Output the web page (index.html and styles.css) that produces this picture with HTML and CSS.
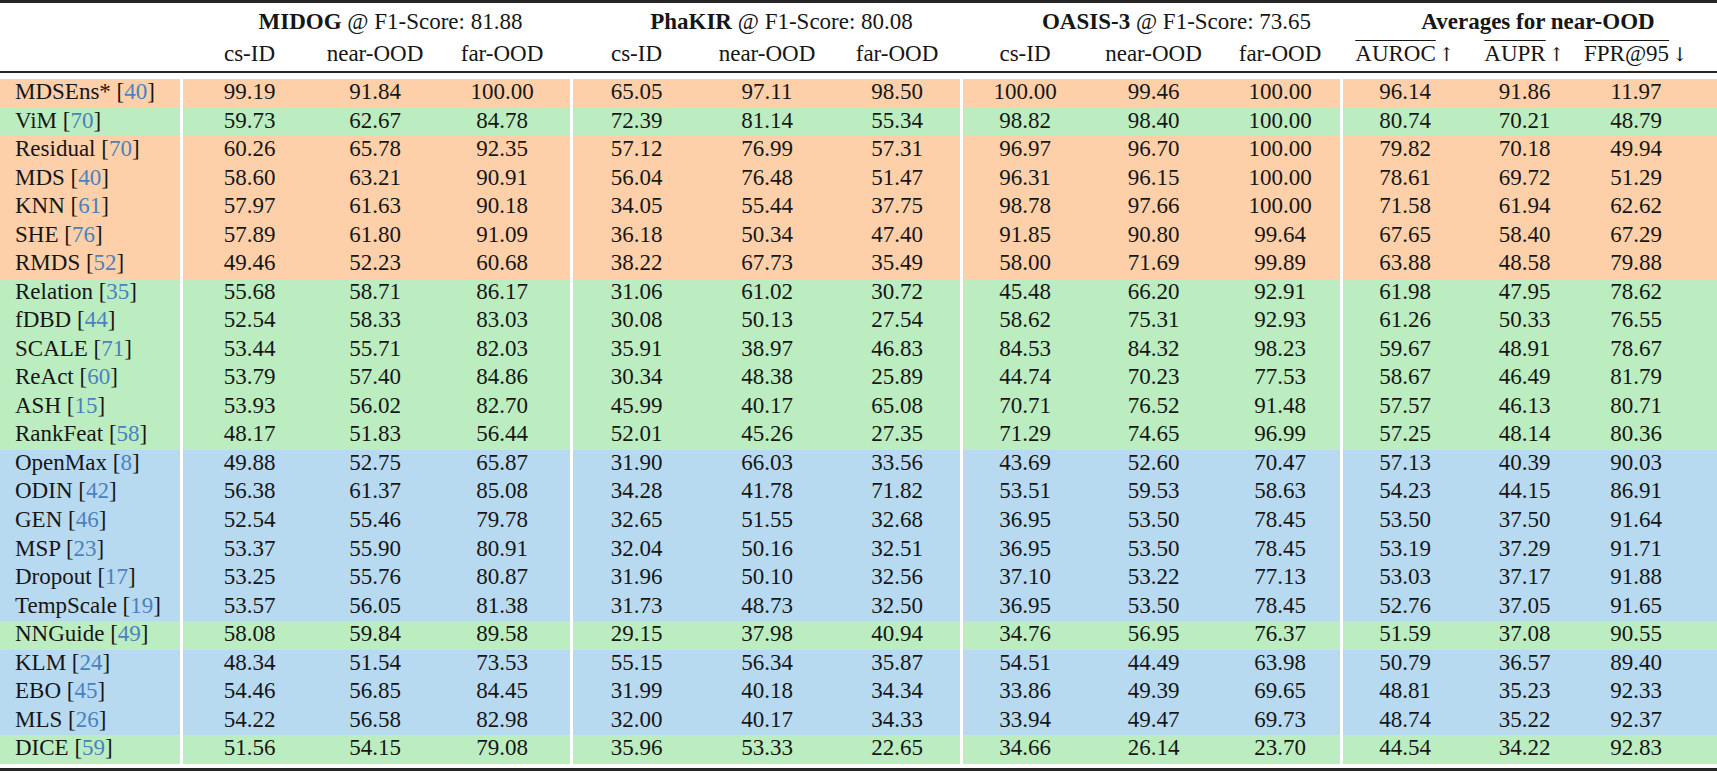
FILE: index.html
```html
<!DOCTYPE html>
<html>
<head>
<meta charset="utf-8">
<link rel="stylesheet" href="styles.css">
</head>
<body>
<div class="table">
  <div class="toprule"></div>
  <div class="row hdr1">
    <div class="m"></div>
    <div class="grp g h-midog"><b>MIDOG</b> @ F1-Score: 81.88</div>
    <div class="grp g h-phakir"><b>PhaKIR</b> @ F1-Score: 80.08</div>
    <div class="grp g h-oasis"><b>OASIS-3</b> @ F1-Score: 73.65</div>
    <div class="grp g h-avg"><b>Averages for near-OOD</b></div>
  </div>
  <div class="row hdr2">
    <div class="m"></div>
    <div class="c g">cs-ID</div><div class="c">near-OOD</div><div class="c">far-OOD</div>
    <div class="c g">cs-ID</div><div class="c">near-OOD</div><div class="c">far-OOD</div>
    <div class="c g">cs-ID</div><div class="c">near-OOD</div><div class="c">far-OOD</div>
    <div class="c g"><span class="ol">AUROC</span><span class="ar">↑</span></div><div class="c"><span class="ol">AUPR</span><span class="ar">↑</span></div><div class="c last"><span class="ol">FPR@95</span><span class="ar">↓</span></div>
  </div>
  <div class="midrule"></div>
  <div class="body">
    <div class="row d o"><div class="m">MDSEns* [<span class="cite">40</span>]</div><div class="c g">99.19</div><div class="c">91.84</div><div class="c">100.00</div><div class="c g">65.05</div><div class="c">97.11</div><div class="c">98.50</div><div class="c g">100.00</div><div class="c">99.46</div><div class="c">100.00</div><div class="c g">96.14</div><div class="c">91.86</div><div class="c last">11.97</div></div>
    <div class="row d gr"><div class="m">ViM [<span class="cite">70</span>]</div><div class="c g">59.73</div><div class="c">62.67</div><div class="c">84.78</div><div class="c g">72.39</div><div class="c">81.14</div><div class="c">55.34</div><div class="c g">98.82</div><div class="c">98.40</div><div class="c">100.00</div><div class="c g">80.74</div><div class="c">70.21</div><div class="c last">48.79</div></div>
    <div class="row d o"><div class="m">Residual [<span class="cite">70</span>]</div><div class="c g">60.26</div><div class="c">65.78</div><div class="c">92.35</div><div class="c g">57.12</div><div class="c">76.99</div><div class="c">57.31</div><div class="c g">96.97</div><div class="c">96.70</div><div class="c">100.00</div><div class="c g">79.82</div><div class="c">70.18</div><div class="c last">49.94</div></div>
    <div class="row d o"><div class="m">MDS [<span class="cite">40</span>]</div><div class="c g">58.60</div><div class="c">63.21</div><div class="c">90.91</div><div class="c g">56.04</div><div class="c">76.48</div><div class="c">51.47</div><div class="c g">96.31</div><div class="c">96.15</div><div class="c">100.00</div><div class="c g">78.61</div><div class="c">69.72</div><div class="c last">51.29</div></div>
    <div class="row d o"><div class="m">KNN [<span class="cite">61</span>]</div><div class="c g">57.97</div><div class="c">61.63</div><div class="c">90.18</div><div class="c g">34.05</div><div class="c">55.44</div><div class="c">37.75</div><div class="c g">98.78</div><div class="c">97.66</div><div class="c">100.00</div><div class="c g">71.58</div><div class="c">61.94</div><div class="c last">62.62</div></div>
    <div class="row d o"><div class="m">SHE [<span class="cite">76</span>]</div><div class="c g">57.89</div><div class="c">61.80</div><div class="c">91.09</div><div class="c g">36.18</div><div class="c">50.34</div><div class="c">47.40</div><div class="c g">91.85</div><div class="c">90.80</div><div class="c">99.64</div><div class="c g">67.65</div><div class="c">58.40</div><div class="c last">67.29</div></div>
    <div class="row d o"><div class="m">RMDS [<span class="cite">52</span>]</div><div class="c g">49.46</div><div class="c">52.23</div><div class="c">60.68</div><div class="c g">38.22</div><div class="c">67.73</div><div class="c">35.49</div><div class="c g">58.00</div><div class="c">71.69</div><div class="c">99.89</div><div class="c g">63.88</div><div class="c">48.58</div><div class="c last">79.88</div></div>
    <div class="row d gr"><div class="m">Relation [<span class="cite">35</span>]</div><div class="c g">55.68</div><div class="c">58.71</div><div class="c">86.17</div><div class="c g">31.06</div><div class="c">61.02</div><div class="c">30.72</div><div class="c g">45.48</div><div class="c">66.20</div><div class="c">92.91</div><div class="c g">61.98</div><div class="c">47.95</div><div class="c last">78.62</div></div>
    <div class="row d gr"><div class="m">fDBD [<span class="cite">44</span>]</div><div class="c g">52.54</div><div class="c">58.33</div><div class="c">83.03</div><div class="c g">30.08</div><div class="c">50.13</div><div class="c">27.54</div><div class="c g">58.62</div><div class="c">75.31</div><div class="c">92.93</div><div class="c g">61.26</div><div class="c">50.33</div><div class="c last">76.55</div></div>
    <div class="row d gr"><div class="m">SCALE [<span class="cite">71</span>]</div><div class="c g">53.44</div><div class="c">55.71</div><div class="c">82.03</div><div class="c g">35.91</div><div class="c">38.97</div><div class="c">46.83</div><div class="c g">84.53</div><div class="c">84.32</div><div class="c">98.23</div><div class="c g">59.67</div><div class="c">48.91</div><div class="c last">78.67</div></div>
    <div class="row d gr"><div class="m">ReAct [<span class="cite">60</span>]</div><div class="c g">53.79</div><div class="c">57.40</div><div class="c">84.86</div><div class="c g">30.34</div><div class="c">48.38</div><div class="c">25.89</div><div class="c g">44.74</div><div class="c">70.23</div><div class="c">77.53</div><div class="c g">58.67</div><div class="c">46.49</div><div class="c last">81.79</div></div>
    <div class="row d gr"><div class="m">ASH [<span class="cite">15</span>]</div><div class="c g">53.93</div><div class="c">56.02</div><div class="c">82.70</div><div class="c g">45.99</div><div class="c">40.17</div><div class="c">65.08</div><div class="c g">70.71</div><div class="c">76.52</div><div class="c">91.48</div><div class="c g">57.57</div><div class="c">46.13</div><div class="c last">80.71</div></div>
    <div class="row d gr"><div class="m">RankFeat [<span class="cite">58</span>]</div><div class="c g">48.17</div><div class="c">51.83</div><div class="c">56.44</div><div class="c g">52.01</div><div class="c">45.26</div><div class="c">27.35</div><div class="c g">71.29</div><div class="c">74.65</div><div class="c">96.99</div><div class="c g">57.25</div><div class="c">48.14</div><div class="c last">80.36</div></div>
    <div class="row d b"><div class="m">OpenMax [<span class="cite">8</span>]</div><div class="c g">49.88</div><div class="c">52.75</div><div class="c">65.87</div><div class="c g">31.90</div><div class="c">66.03</div><div class="c">33.56</div><div class="c g">43.69</div><div class="c">52.60</div><div class="c">70.47</div><div class="c g">57.13</div><div class="c">40.39</div><div class="c last">90.03</div></div>
    <div class="row d b"><div class="m">ODIN [<span class="cite">42</span>]</div><div class="c g">56.38</div><div class="c">61.37</div><div class="c">85.08</div><div class="c g">34.28</div><div class="c">41.78</div><div class="c">71.82</div><div class="c g">53.51</div><div class="c">59.53</div><div class="c">58.63</div><div class="c g">54.23</div><div class="c">44.15</div><div class="c last">86.91</div></div>
    <div class="row d b"><div class="m">GEN [<span class="cite">46</span>]</div><div class="c g">52.54</div><div class="c">55.46</div><div class="c">79.78</div><div class="c g">32.65</div><div class="c">51.55</div><div class="c">32.68</div><div class="c g">36.95</div><div class="c">53.50</div><div class="c">78.45</div><div class="c g">53.50</div><div class="c">37.50</div><div class="c last">91.64</div></div>
    <div class="row d b"><div class="m">MSP [<span class="cite">23</span>]</div><div class="c g">53.37</div><div class="c">55.90</div><div class="c">80.91</div><div class="c g">32.04</div><div class="c">50.16</div><div class="c">32.51</div><div class="c g">36.95</div><div class="c">53.50</div><div class="c">78.45</div><div class="c g">53.19</div><div class="c">37.29</div><div class="c last">91.71</div></div>
    <div class="row d b"><div class="m">Dropout [<span class="cite">17</span>]</div><div class="c g">53.25</div><div class="c">55.76</div><div class="c">80.87</div><div class="c g">31.96</div><div class="c">50.10</div><div class="c">32.56</div><div class="c g">37.10</div><div class="c">53.22</div><div class="c">77.13</div><div class="c g">53.03</div><div class="c">37.17</div><div class="c last">91.88</div></div>
    <div class="row d b"><div class="m">TempScale [<span class="cite">19</span>]</div><div class="c g">53.57</div><div class="c">56.05</div><div class="c">81.38</div><div class="c g">31.73</div><div class="c">48.73</div><div class="c">32.50</div><div class="c g">36.95</div><div class="c">53.50</div><div class="c">78.45</div><div class="c g">52.76</div><div class="c">37.05</div><div class="c last">91.65</div></div>
    <div class="row d gr"><div class="m">NNGuide [<span class="cite">49</span>]</div><div class="c g">58.08</div><div class="c">59.84</div><div class="c">89.58</div><div class="c g">29.15</div><div class="c">37.98</div><div class="c">40.94</div><div class="c g">34.76</div><div class="c">56.95</div><div class="c">76.37</div><div class="c g">51.59</div><div class="c">37.08</div><div class="c last">90.55</div></div>
    <div class="row d b"><div class="m">KLM [<span class="cite">24</span>]</div><div class="c g">48.34</div><div class="c">51.54</div><div class="c">73.53</div><div class="c g">55.15</div><div class="c">56.34</div><div class="c">35.87</div><div class="c g">54.51</div><div class="c">44.49</div><div class="c">63.98</div><div class="c g">50.79</div><div class="c">36.57</div><div class="c last">89.40</div></div>
    <div class="row d b"><div class="m">EBO [<span class="cite">45</span>]</div><div class="c g">54.46</div><div class="c">56.85</div><div class="c">84.45</div><div class="c g">31.99</div><div class="c">40.18</div><div class="c">34.34</div><div class="c g">33.86</div><div class="c">49.39</div><div class="c">69.65</div><div class="c g">48.81</div><div class="c">35.23</div><div class="c last">92.33</div></div>
    <div class="row d b"><div class="m">MLS [<span class="cite">26</span>]</div><div class="c g">54.22</div><div class="c">56.58</div><div class="c">82.98</div><div class="c g">32.00</div><div class="c">40.17</div><div class="c">34.33</div><div class="c g">33.94</div><div class="c">49.47</div><div class="c">69.73</div><div class="c g">48.74</div><div class="c">35.22</div><div class="c last">92.37</div></div>
    <div class="row d gr"><div class="m">DICE [<span class="cite">59</span>]</div><div class="c g">51.56</div><div class="c">54.15</div><div class="c">79.08</div><div class="c g">35.96</div><div class="c">53.33</div><div class="c">22.65</div><div class="c g">34.66</div><div class="c">26.14</div><div class="c">23.70</div><div class="c g">44.54</div><div class="c">34.22</div><div class="c last">92.83</div></div>
  </div>
  <div class="bottomrule"></div>
</div>
</body>
</html>
```

FILE: styles.css
```css
html, body {
  margin: 0;
  padding: 0;
  background: #ffffff;
}

.table {
  width: 1717px;
  font-family: "Liberation Serif", "Times New Roman", "DejaVu Serif", serif;
  font-size: 23px;
  color: #161616;
}

.toprule {
  height: 3px;
  background: #262626;
}

.midrule {
  height: 2px;
  margin-top: 2px;
  background: #262626;
}

.bottomrule {
  height: 3px;
  margin-top: 4px;
  background: #262626;
}

.row {
  display: grid;
  grid-template-columns: 180px 136px 118px 136px 130px 134px 126px 127px 133px 120px 127px 115px 135px;
}

.hdr1 {
  padding-top: 2px;
  height: 34px;
  line-height: 34px;
}

.hdr2 {
  height: 30px;
  line-height: 30px;
}

.grp {
  grid-column: span 3;
  text-align: center;
  white-space: nowrap;
}

.h-midog { padding-left: 28px; }
.h-phakir { padding-left: 30px; }
.h-oasis { padding-left: 50px; }
.h-avg { padding-left: 16px; }

.grp b {
  font-weight: 700;
}

.c {
  text-align: center;
  white-space: nowrap;
}

.g {
  margin-left: 3px;
}

.last {
  padding-right: 27px;
}

.m {
  padding-left: 15px;
  white-space: nowrap;
}

.ol {
  text-decoration: overline;
  text-decoration-thickness: 1px;
}

.ar {
  margin-left: 3px;
  font-family: "DejaVu Serif", "Liberation Serif", serif;
  font-size: 19px;
}

.body {
  margin-top: 6px;
}

.d {
  height: 28.54px;
}

.d > div {
  line-height: 26.54px;
  padding-bottom: 2px;
}

.o > div { background: #fdd0aa; }
.gr > div { background: #bcedc0; }
.b > div { background: #b8daf1; }

.cite {
  color: #4a82bf;
}
```
